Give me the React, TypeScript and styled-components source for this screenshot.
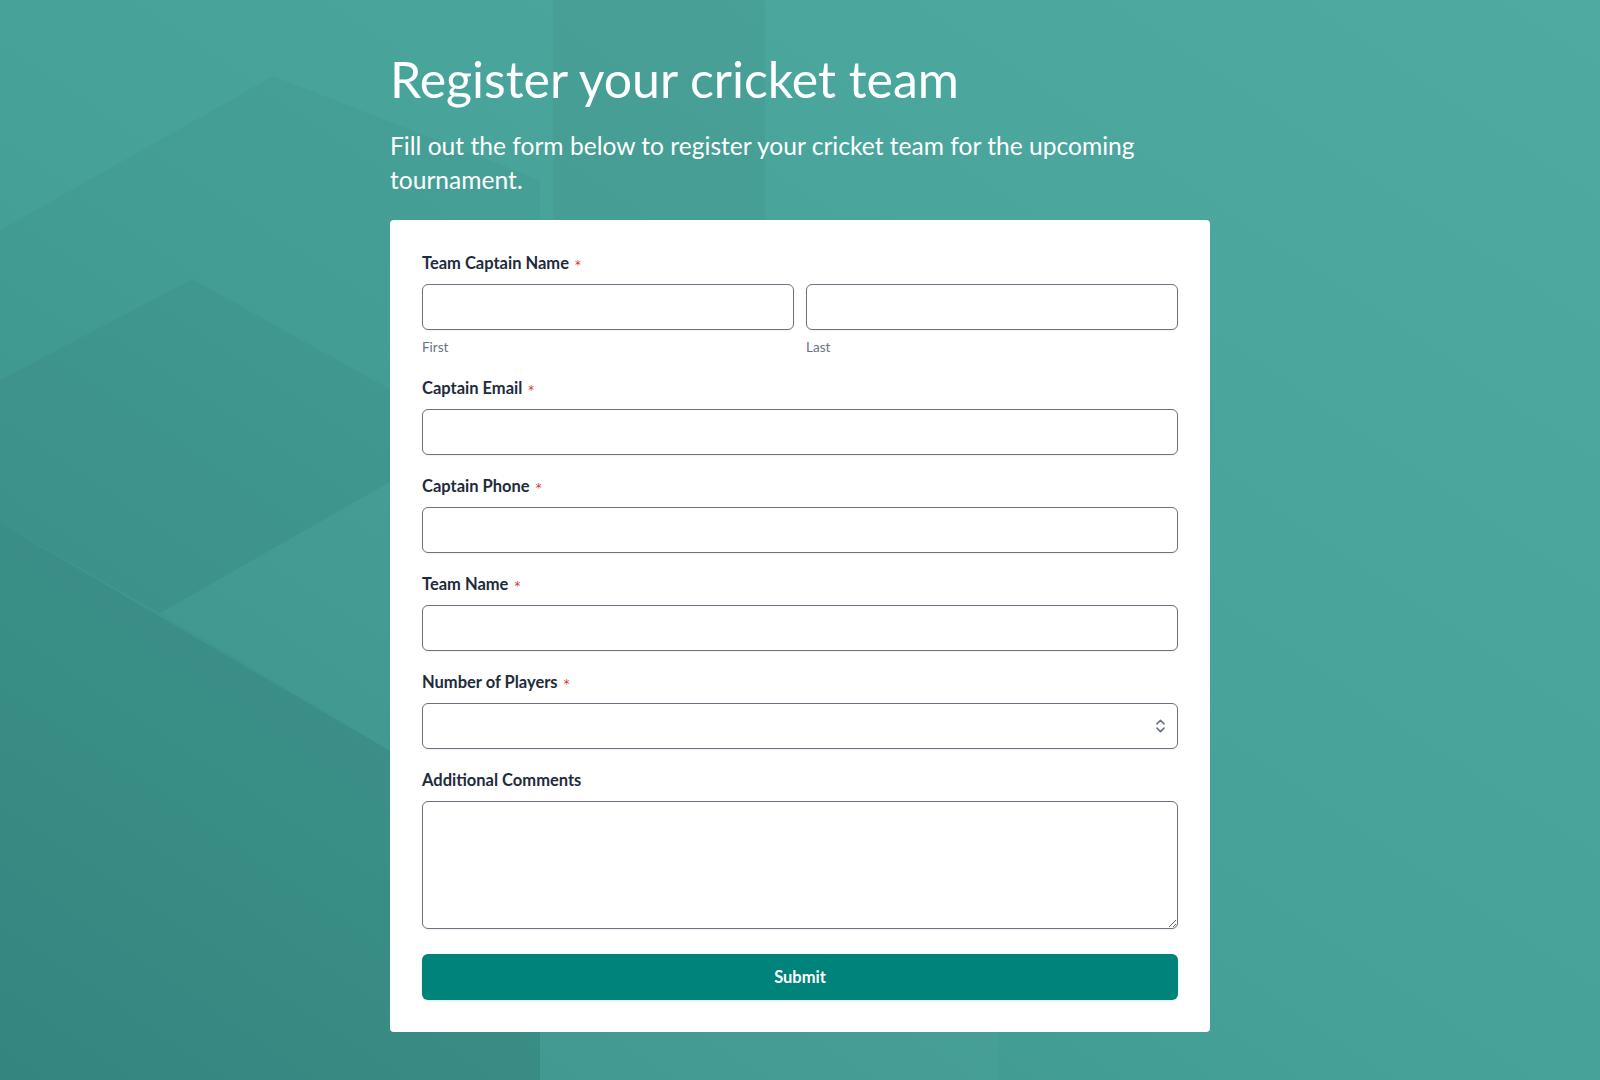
import React from "react";
import styled, { createGlobalStyle } from "styled-components";
import { ChevronsUpDown } from "lucide-react";

const GlobalStyle = createGlobalStyle`
  * { box-sizing: border-box; }
  html, body { margin: 0; padding: 0; }
  body {
    font-family: Lato, "Noto Sans", "Liberation Sans", sans-serif;
    background: #449f97;
  }
`;

const Page = styled.div`
  position: relative;
  min-height: 1080px;
  overflow: hidden;
`;

const Backdrop = styled.svg`
  position: absolute;
  inset: 0;
  width: 100%;
  height: 100%;
  z-index: 0;
`;

const Main = styled.main`
  position: relative;
  z-index: 1;
  width: 820px;
  margin: 0 auto;
  padding: 49px 0 48px;
`;

const Title = styled.h1`
  margin: 0;
  font-family: Lato, "Noto Sans", sans-serif;
  font-weight: 400;
  font-size: 50px;
  line-height: 60px;
  color: #ffffff;
`;

const Intro = styled.p`
  margin: 20px 0 23px;
  font-size: 24.6px;
  line-height: 34px;
  font-weight: 400;
  color: #ffffff;
`;

const Card = styled.section`
  background: #ffffff;
  border-radius: 4px;
  padding: 32px;
`;

const Form = styled.form`
  display: flex;
  flex-direction: column;
  gap: 20px;
`;

const Field = styled.div`
  display: flex;
  flex-direction: column;
`;

const Label = styled.label`
  display: flex;
  align-items: center;
  font-size: 16.5px;
  line-height: 22px;
  font-weight: 700;
  color: #1e2b3c;
  margin-bottom: 10px;
`;

const Req = styled.span`
  position: relative;
  top: 2px;
  color: #d6332a;
  font-family: "DejaVu Sans", sans-serif;
  font-size: 11.5px;
  font-weight: 400;
  margin-left: 6px;
`;

const NameRow = styled.div`
  display: grid;
  grid-template-columns: 1fr 1fr;
  column-gap: 12px;
`;

const SubField = styled.div`
  display: flex;
  flex-direction: column;
`;

const SubLabel = styled.span`
  margin-top: 8px;
  font-size: 13.5px;
  line-height: 19px;
  color: #6b7280;
`;

const controlBase = `
  width: 100%;
  border: 1px solid #6b7280;
  border-radius: 6px;
  background: #ffffff;
  box-shadow: 0 1px 2px rgba(0, 0, 0, 0.06);
  font-family: Lato, "Noto Sans", sans-serif;
  font-size: 15px;
  color: #1e2b3c;
  padding: 0 12px;
  outline: none;
`;

const Input = styled.input`
  ${controlBase}
  height: 46px;
`;

const SelectWrap = styled.div`
  position: relative;
`;

const Select = styled.select`
  ${controlBase}
  height: 46px;
  appearance: none;
  -webkit-appearance: none;
`;

const SelectIcon = styled.span`
  position: absolute;
  right: 9px;
  top: 50%;
  transform: translateY(-50%);
  display: flex;
  color: #6b7280;
  pointer-events: none;
`;

const TextArea = styled.textarea`
  ${controlBase}
  height: 128px;
  padding: 10px 12px;
  resize: vertical;
  display: block;
`;

const Submit = styled.button`
  margin-top: 5px;
  height: 46px;
  width: 100%;
  border: none;
  border-radius: 6px;
  background: #00837a;
  color: #ffffff;
  font-family: Lato, "Noto Sans", sans-serif;
  font-size: 16.5px;
  font-weight: 700;
  box-shadow: 0 1px 3px rgba(0, 0, 0, 0.12);
  cursor: pointer;
`;

function Background() {
  return (
    <Backdrop viewBox="0 0 1600 1080" preserveAspectRatio="none" aria-hidden>
      <defs>
        <linearGradient id="bg" x1="1" y1="0" x2="0" y2="1">
          <stop offset="0" stopColor="#4faaa2" />
          <stop offset="0.55" stopColor="#46a198" />
          <stop offset="1" stopColor="#38918a" />
        </linearGradient>
      </defs>
      <rect x="0" y="0" width="1600" height="1080" fill="url(#bg)" />
      <rect x="553" y="0" width="212" height="1032" fill="#000" opacity="0.035" />
      <rect x="540" y="1032" width="458" height="48" fill="#fff" opacity="0.025" />
      <polygon points="0,230 273,76 540,180 540,1080 0,1080" fill="#000" opacity="0.02" />
      <polygon points="0,380 192,279 390,389 390,482 160,613 0,523" fill="#000" opacity="0.03" />
      <polygon points="0,523 390,751 540,838 540,1080 0,1080" fill="#000" opacity="0.05" />
      <polygon points="160,613 390,482 390,751" fill="#fff" opacity="0.02" />
    </Backdrop>
  );
}

export default function App() {
  return (
    <>
      <GlobalStyle />
      <Page>
        <Background />
        <Main>
          <Title>Register your cricket team</Title>
          <Intro>
            Fill out the form below to register your cricket team for the upcoming
            tournament.
          </Intro>
          <Card>
            <Form onSubmit={(e) => e.preventDefault()}>
              <Field>
                <Label>
                  Team Captain Name<Req>*</Req>
                </Label>
                <NameRow>
                  <SubField>
                    <Input type="text" aria-label="First" />
                    <SubLabel>First</SubLabel>
                  </SubField>
                  <SubField>
                    <Input type="text" aria-label="Last" />
                    <SubLabel>Last</SubLabel>
                  </SubField>
                </NameRow>
              </Field>
              <Field>
                <Label htmlFor="email">
                  Captain Email<Req>*</Req>
                </Label>
                <Input id="email" type="email" />
              </Field>
              <Field>
                <Label htmlFor="phone">
                  Captain Phone<Req>*</Req>
                </Label>
                <Input id="phone" type="tel" />
              </Field>
              <Field>
                <Label htmlFor="team">
                  Team Name<Req>*</Req>
                </Label>
                <Input id="team" type="text" />
              </Field>
              <Field>
                <Label htmlFor="players">
                  Number of Players<Req>*</Req>
                </Label>
                <SelectWrap>
                  <Select id="players" defaultValue="">
                    <option value="" />
                    <option value="11">11</option>
                    <option value="12">12</option>
                    <option value="13">13</option>
                    <option value="14">14</option>
                    <option value="15">15</option>
                  </Select>
                  <SelectIcon>
                    <ChevronsUpDown size={17} strokeWidth={2.2} />
                  </SelectIcon>
                </SelectWrap>
              </Field>
              <Field>
                <Label htmlFor="comments">Additional Comments</Label>
                <TextArea id="comments" />
              </Field>
              <Submit type="submit">Submit</Submit>
            </Form>
          </Card>
        </Main>
      </Page>
    </>
  );
}
